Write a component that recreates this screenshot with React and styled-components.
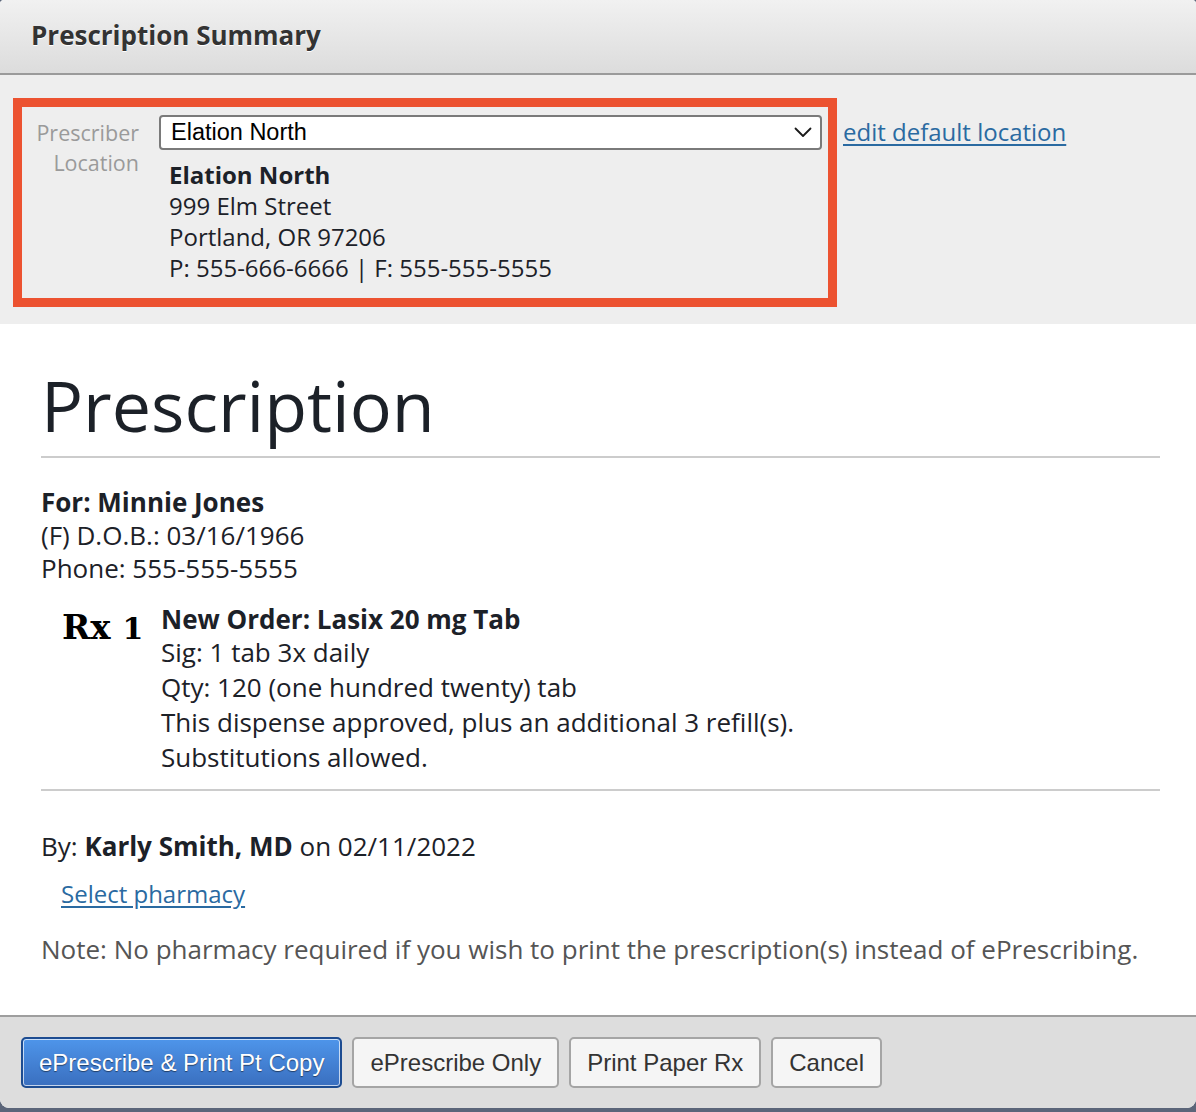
import styled, { createGlobalStyle } from 'styled-components';

const GlobalStyle = createGlobalStyle`
  html, body {
    margin: 0;
    padding: 0;
    background: #5b6579;
  }
  body {
    font-family: "Open Sans", "Noto Sans", sans-serif;
    color: #1c2128;
  }
`;

function Chevron() {
    return (
        <svg width="18" height="11" viewBox="0 0 18 11" fill="none">
            <path d="M1.5 1.5 L9 9 L16.5 1.5" stroke="#1a1a1a" strokeWidth="1.8" strokeLinecap="round" strokeLinejoin="round"/>
        </svg>
    );
}

const buttons = [
    { label: 'ePrescribe & Print Pt Copy', primary: true },
    { label: 'ePrescribe Only' },
    { label: 'Print Paper Rx' },
    { label: 'Cancel' },
];

function App() {
    return (
        <>
            <GlobalStyle/>
            <Page>
                <Dialog>
                    <Header>
                        <HeaderTitle>Prescription Summary</HeaderTitle>
                    </Header>

                    <LocationBar>
                        <LocationBox>
                            <LocationLabel>Prescriber<br/>Location</LocationLabel>
                            <LocationMain>
                                <Select>
                                    <span>Elation North</span>
                                    <Chevron/>
                                </Select>
                                <Address>
                                    <strong>Elation North</strong>
                                    <div>999 Elm Street</div>
                                    <div>Portland, OR 97206</div>
                                    <div>P: 555-666-6666 | F: 555-555-5555</div>
                                </Address>
                            </LocationMain>
                        </LocationBox>
                        <Link href="#" $top="17px">edit default location</Link>
                    </LocationBar>

                    <Body>
                        <Heading>Prescription</Heading>
                        <Rule/>
                        <Patient>
                            <strong>For: Minnie Jones</strong>
                            <div>(F) D.O.B.: 03/16/1966</div>
                            <div>Phone: 555-555-5555</div>
                        </Patient>

                        <RxRow>
                            <RxMark>Rx <RxNum>1</RxNum></RxMark>
                            <RxDetails>
                                <RxTitle>New Order: Lasix 20 mg Tab</RxTitle>
                                <div>Sig: 1 tab 3x daily</div>
                                <div>Qty: 120 (one hundred twenty) tab</div>
                                <div>This dispense approved, plus an additional 3 refill(s).</div>
                                <div>Substitutions allowed.</div>
                            </RxDetails>
                        </RxRow>
                        <Rule/>

                        <ByLine>By: <strong>Karly Smith, MD</strong> on 02/11/2022</ByLine>
                        <PharmacyLink href="#">Select pharmacy</PharmacyLink>
                        <Note>Note: No pharmacy required if you wish to print the prescription(s) instead of ePrescribing.</Note>
                    </Body>

                    <Footer>
                        {buttons.map(b => (
                            <Button key={b.label} $primary={b.primary}>{b.label}</Button>
                        ))}
                    </Footer>
                </Dialog>
            </Page>
        </>
    );
}

export default App;

const Page = styled.div`
  width: 1196px;
  height: 1112px;
  overflow: hidden;
  background: #5b6579;
`;

const Dialog = styled.div`
  width: 1196px;
  height: 1108px;
  display: flex;
  flex-direction: column;
  background: #ffffff;
  border-radius: 4px 4px 9px 9px;
  overflow: hidden;
`;

const Header = styled.div`
  height: 75px;
  box-sizing: border-box;
  padding: 17px 31px 0;
  background: linear-gradient(#f1f1f1, #dcdcdc);
  border-bottom: 2px solid #9a9a9a;
`;

const HeaderTitle = styled.h1`
  margin: 0;
  font-size: 26px;
  font-weight: 700;
  line-height: 36px;
  color: #333333;
  text-shadow: 0 1px 0 #ffffff;
`;

const LocationBar = styled.div`
  display: flex;
  align-items: flex-start;
  gap: 6px;
  background: #eeeeee;
  padding: 23px 0 17px 13px;
`;

const LocationBox = styled.div`
  width: 824px;
  box-sizing: border-box;
  display: flex;
  border: 9px solid #ec5230;
  padding: 8px 6px 15px 0;
`;

const LocationLabel = styled.div`
  width: 117px;
  padding-top: 3px;
  text-align: right;
  font-size: 21.5px;
  line-height: 30px;
  color: #9a9a9a;
`;

const LocationMain = styled.div`
  flex: 1;
  margin-left: 20px;
`;

const Select = styled.div`
  height: 35px;
  box-sizing: border-box;
  display: flex;
  align-items: center;
  justify-content: space-between;
  padding: 0 8px 0 10px;
  background: #ffffff;
  border: 2px solid #7a7a7a;
  border-radius: 4px;
  font-family: "Liberation Sans", Arial, sans-serif;
  font-size: 23.5px;
  color: #000000;
`;

const Address = styled.div`
  padding: 9px 0 0 10px;
  font-size: 24px;
  line-height: 31px;
  color: #1c2128;

  strong {
    font-weight: 700;
  }
`;

const Link = styled.a`
  margin-top: ${p => p.$top || '0'};
  font-size: 24px;
  line-height: 34px;
  color: #2a6aa1;
  text-decoration: underline;
  text-underline-offset: 3px;
`;

const Body = styled.div`
  flex: 1;
  padding: 30px 36px 0 41px;
`;

const Heading = styled.h2`
  margin: 0;
  font-size: 70px;
  font-weight: 400;
  line-height: 102px;
  color: #1c2128;
`;

const Rule = styled.div`
  height: 2px;
  background: #cccccc;
`;

const Patient = styled.div`
  padding-top: 28px;
  font-size: 26px;
  line-height: 33px;
`;

const RxRow = styled.div`
  display: flex;
  padding: 19px 0 14px 21px;
`;

const RxMark = styled.div`
  width: 99px;
  padding-top: 5px;
  font-family: "DejaVu Serif", "Liberation Serif", serif;
  font-weight: 700;
  font-size: 34px;
  line-height: 36px;
  color: #000000;
`;

const RxNum = styled.span`
  font-size: 30px;
`;

const RxDetails = styled.div`
  font-size: 26px;
  line-height: 35px;
`;

const RxTitle = styled.div`
  font-weight: 700;
  line-height: 31px;
`;

const ByLine = styled.div`
  padding-top: 37px;
  font-size: 26px;
  line-height: 36px;
`;

const PharmacyLink = styled(Link)`
  display: inline-block;
  margin: 12px 0 0 20px;
  font-size: 24px;
  line-height: 36px;
`;

const Note = styled.div`
  padding-top: 19px;
  font-size: 26px;
  line-height: 36px;
  color: #555555;
`;

const Footer = styled.div`
  height: 93px;
  box-sizing: border-box;
  display: flex;
  gap: 10px;
  padding: 20px 21px 0;
  background: #dddddd;
  border-top: 2px solid #9e9e9e;
`;

const Button = styled.button`
  height: 51px;
  box-sizing: border-box;
  padding: 0 16px;
  font-family: "Liberation Sans", Arial, sans-serif;
  font-size: 24px;
  border-radius: 5px;
  cursor: pointer;
  color: ${p => (p.$primary ? '#ffffff' : '#333333')};
  background: ${p => (p.$primary ? 'linear-gradient(#4e95ea, #3a6fbf)' : '#f5f5f5')};
  border: 2px solid ${p => (p.$primary ? '#1d4c91' : '#a5a5a5')};
  box-shadow: ${p => (p.$primary ? 'inset 0 0 0 1px rgba(255,255,255,0.7)' : 'none')};
  text-shadow: ${p => (p.$primary ? '0 1px 1px rgba(0,0,0,0.5)' : 'none')};
`;
